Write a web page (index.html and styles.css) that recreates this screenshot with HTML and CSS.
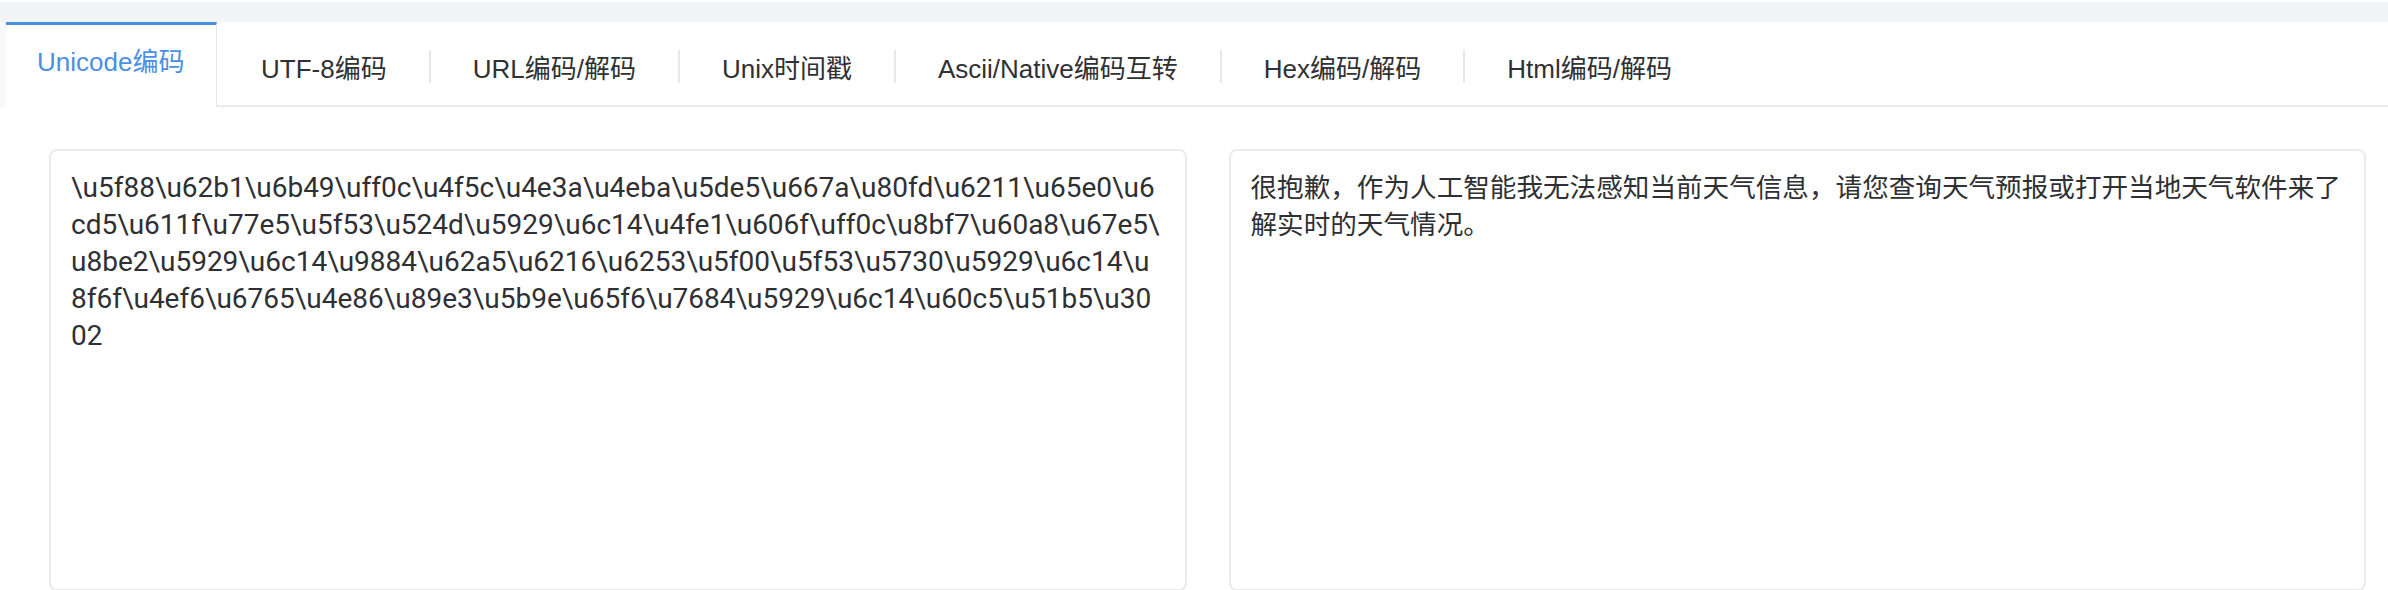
FILE: index.html
```html
<!DOCTYPE html>
<html lang="zh-CN">
<head>
<meta charset="utf-8">
<title>Unicode编码</title>
<link rel="stylesheet" href="styles.css">
</head>
<body>
<div class="page">
  <div class="band"></div>
  <div class="tabbar">
    <div class="tab active">Unicode编码</div>
    <div class="tabs-rest">
      <div class="tab first">UTF-8编码</div>
      <span class="sep"></span>
      <div class="tab">URL编码/解码</div>
      <span class="sep"></span>
      <div class="tab">Unix时间戳</div>
      <span class="sep"></span>
      <div class="tab">Ascii/Native编码互转</div>
      <span class="sep"></span>
      <div class="tab">Hex编码/解码</div>
      <span class="sep"></span>
      <div class="tab">Html编码/解码</div>
    </div>
  </div>
  <div class="panes">
    <div class="editor latin">
      <span class="line">\u5f88\u62b1\u6b49\uff0c\u4f5c\u4e3a\u4eba\u5de5\u667a\u80fd\u6211\u65e0\u6</span>
      <span class="line">cd5\u611f\u77e5\u5f53\u524d\u5929\u6c14\u4fe1\u606f\uff0c\u8bf7\u60a8\u67e5\</span>
      <span class="line">u8be2\u5929\u6c14\u9884\u62a5\u6216\u6253\u5f00\u5f53\u5730\u5929\u6c14\u</span>
      <span class="line">8f6f\u4ef6\u6765\u4e86\u89e3\u5b9e\u65f6\u7684\u5929\u6c14\u60c5\u51b5\u30</span>
      <span class="line">02</span>
    </div>
    <div class="editor cjk">
      <span class="line">很抱歉，作为人工智能我无法感知当前天气信息，请您查询天气预报或打开当地天气软件来了</span>
      <span class="line">解实时的天气情况。</span>
    </div>
  </div>
</div>
</body>
</html>
```
FILE: styles.css
```css
html, body {
  margin: 0;
  padding: 0;
  background: #ffffff;
  overflow: hidden;
}

.page {
  width: 2388px;
  height: 590px;
  overflow: hidden;
  padding-top: 2px;
  box-sizing: border-box;
  font-family: "Liberation Sans", "Noto Sans CJK SC", sans-serif;
  color: #303133;
}

.band {
  height: 20px;
  background: #f3f4f6;
}

.tabbar {
  display: flex;
  height: 85px;
  padding-left: 6px;
  background: linear-gradient(to right, #f7f8f9 0, #f7f8f9 6px, #ffffff 6px);
}

.tab {
  font-size: 26px;
  line-height: 26px;
  white-space: nowrap;
  padding: 34px 42px 0 42px;
  box-sizing: border-box;
}

.tab.active {
  width: 211px;
  height: 85px;
  padding: 24px 0 0 31px;
  border-top: 3px solid #4a90e2;
  border-right: 1px solid #e6e8eb;
  background: #ffffff;
  color: #4a90e2;
}

.tabs-rest {
  flex: 1;
  display: flex;
  align-items: flex-start;
  height: 85px;
  box-sizing: border-box;
  border-bottom: 2px solid #ececee;
}

.tab.first {
  padding-left: 44px;
}

.sep {
  width: 2px;
  height: 33px;
  margin-top: 28px;
  background: #e8e8ea;
  flex: none;
}

.panes {
  display: grid;
  grid-template-columns: 1fr 1fr;
  column-gap: 42px;
  padding: 42px 22px 0 49px;
}

.editor {
  height: 442px;
  box-sizing: border-box;
  border: 2px solid #ebebed;
  border-radius: 8px;
  padding: 18px 20px 0 20px;
  line-height: 37px;
  color: #2f3033;
  overflow: hidden;
}

.editor .line {
  display: block;
  white-space: nowrap;
}

.editor.latin {
  font-family: Roboto, "Noto Sans CJK SC", sans-serif;
  font-size: 28px;
}

.editor.cjk {
  font-family: Roboto, "Noto Sans CJK SC", sans-serif;
  font-size: 26.6px;
}
```
